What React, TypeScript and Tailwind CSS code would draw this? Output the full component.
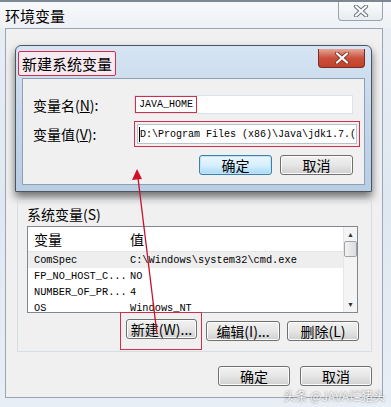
import React from "react";

const cjk = { fontFamily: '"Noto Sans CJK SC", "Liberation Sans", sans-serif' };
const mono = { fontFamily: '"Liberation Mono", "Noto Sans CJK SC", monospace' };

function CloseX({ color = "#fff", stroke = "#555" }: { color?: string; stroke?: string }) {
  return (
    <svg width="16" height="12" viewBox="0 0 16 12">
      <path d="M3 1.5 L13 10.5 M13 1.5 L3 10.5" stroke={stroke} strokeWidth="4.2" strokeLinecap="round" />
      <path d="M3 1.5 L13 10.5 M13 1.5 L3 10.5" stroke={color} strokeWidth="2.2" strokeLinecap="round" />
    </svg>
  );
}

function WinButton({ label, w, focused = false }: { label: string; w: string; focused?: boolean }) {
  return (
    <div
      className={`${w} h-[20px] flex items-center justify-center rounded-[3px] border text-[14px] leading-none text-black ${
        focused
          ? "border-[#3c7fb1] bg-gradient-to-b from-[#eaf6fd] via-[#d9f0fc] to-[#a7d9f5] shadow-[inset_0_0_0_1px_#bfe4f8]"
          : "border-[#707070] bg-gradient-to-b from-[#f2f2f2] via-[#e6e6e6] to-[#cfcfcf] shadow-[inset_0_0_0_1px_#fcfcfc]"
      }`}
      style={cjk}
    >
      {label}
    </div>
  );
}

const rows = [
  { name: "ComSpec", value: "C:\\Windows\\system32\\cmd.exe", sel: true },
  { name: "FP_NO_HOST_C...", value: "NO" },
  { name: "NUMBER_OF_PR...", value: "4" },
  { name: "OS", value: "Windows_NT" },
];

export default function App() {
  return (
    <div className="relative w-[391px] h-[407px] overflow-hidden bg-gradient-to-b from-[#e9eef4] via-[#dfe8f1] to-[#e8eef5] border-t-[2px] border-[#7d8894]">
      {/* outer title bar */}
      <div className="h-[26px] flex items-start justify-between bg-gradient-to-b from-[#f7f8fa] to-[#eef1f5]">
        <span className="pl-[5px] pt-[6px] text-[15px] leading-none text-black" style={cjk}>
          环境变量
        </span>
        <div className="mr-[8px] w-[45px] h-[19px] flex items-center justify-center rounded-b-[4px] border border-t-0 border-[#9aa4ae] bg-gradient-to-b from-[#fbfbfb] to-[#e8ecf0]">
          <CloseX color="#fff" stroke="#6b7580" />
        </div>
      </div>

      {/* outer content */}
      <div className="ml-[5px] w-[378px] h-[370px] bg-[#f0f0f0] border border-[#98a6b5] flex flex-col">
        {/* new system variable dialog */}
        <div className="ml-[9px] mt-[16px] w-[357px] h-[147px] rounded-t-[6px] border border-[#4b5663] bg-gradient-to-b from-[#d6e4f2] via-[#c3d6ea] to-[#b9cde3] shadow-[0_5px_9px_rgba(0,0,0,0.55)] flex flex-col">
          <div className="h-[32px] flex items-start justify-between">
            <span
              className="ml-[2px] mt-[5px] px-[3px] h-[25px] flex items-center border-[1.5px] border-[#d22d4a] rounded-[2px] bg-[#f6eaf0] text-[15px] leading-none text-black"
              style={cjk}
            >
              新建系统变量
            </span>
            <div className="mr-[6px] mt-[3px] w-[47px] h-[19px] flex items-center justify-center rounded-b-[4px] border border-t-0 border-[#7a2a20] bg-gradient-to-b from-[#e6a597] via-[#c9503c] to-[#c4402a]">
              <CloseX color="#fff" stroke="#8a3a2e" />
            </div>
          </div>
          <div className="mx-[6px] h-[107px] bg-[#f0f0f0] border border-[#8ea0b5] flex flex-col pl-[10px] pt-[16px]">
            <div className="flex items-center h-[19px]">
              <span className="w-[101px] text-[14px] leading-none text-black" style={cjk}>
                变量名(<span className="underline">N</span>):
              </span>
              <div className="w-[219px] h-[19px] bg-white border border-[#dde3ea] flex items-stretch">
                <span
                  className="px-[3px] flex items-center border-[1.5px] border-[#d22d4a] text-[10px] text-black"
                  style={mono}
                >
                  JAVA_HOME
                </span>
              </div>
            </div>
            <div className="flex items-center mt-[7px] h-[26px]">
              <span className="w-[101px] text-[14px] leading-none text-black" style={cjk}>
                变量值(<span className="underline">V</span>):
              </span>
              <div className="w-[226px] h-[26px] border-[1.5px] border-[#d22d4a] p-[2px]">
                <div
                  className="h-full bg-white border border-[#b8c2cc] flex items-center pl-[1px] text-[10px] text-black whitespace-nowrap overflow-hidden"
                  style={mono}
                >
                  <span className="border-l border-black">D:\Program Files (x86)\Java\jdk1.7.(</span>
                </div>
              </div>
            </div>
            <div className="flex justify-end gap-[8px] pr-[11px] mt-[8px]">
              <WinButton label="确定" w="w-[73px]" focused />
              <WinButton label="取消" w="w-[73px]" />
            </div>
          </div>
        </div>

        {/* system variables group */}
        <div className="ml-[11px] mt-[8px] w-[355px] h-[152px] border border-[#d5dde5] flex flex-col pl-[9px]">
          <span className="pt-[6px] text-[14px] leading-none text-black" style={cjk}>
            系统变量(S)
          </span>
          <div className="mt-[5px] w-[331px] h-[87px] bg-white border border-[#828790] flex overflow-hidden">
            <div className="flex-1 flex flex-col">
              <div className="h-[25px] shrink-0 flex items-center border-b border-[#e5e5e5] text-[14px] leading-none text-black" style={cjk}>
                <span className="w-[101px] pl-[6px]">变量</span>
                <span className="pl-[1px]">值</span>
              </div>
              {rows.map((r) => (
                <div
                  key={r.name}
                  className={`h-[16px] shrink-0 flex items-center text-[10.3px] leading-none text-black whitespace-nowrap ${
                    r.sel ? "bg-[#eeeeee]" : ""
                  }`}
                  style={mono}
                >
                  <span className="w-[101px] pl-[6px]">{r.name}</span>
                  <span className="pl-[1px]">{r.value}</span>
                </div>
              ))}
            </div>
            <div className="w-[14px] bg-[#f4f4f4] border-l border-[#e6e6e6] flex flex-col items-center pt-[4px]">
              <span className="text-[7px] leading-none text-[#333]">▲</span>
              <div className="mt-[3px] w-[13px] h-[16px] rounded-[2px] border border-[#9da3aa] bg-gradient-to-r from-[#f3f3f3] to-[#dcdcdc]" />
              <span className="mt-auto mb-[4px] text-[7px] leading-none text-[#333]">▼</span>
            </div>
          </div>
          <div className="flex items-start -mt-[1px]">
            <div className="ml-[93px] w-[82px] h-[38px] border-[1.5px] border-[#d22d4a] pt-[6px] pl-[5px]">
              <WinButton label="新建(W)..." w="w-[71px]" />
            </div>
            <div className="ml-[4px] mt-[9px]">
              <WinButton label="编辑(I)..." w="w-[74px]" />
            </div>
            <div className="ml-[7px] mt-[9px]">
              <WinButton label="删除(L)" w="w-[72px]" />
            </div>
          </div>
        </div>

        <div className="flex justify-end gap-[10px] pr-[10px] mt-[14px]">
          <WinButton label="确定" w="w-[72px]" />
          <WinButton label="取消" w="w-[72px]" />
        </div>
      </div>

      {/* watermark */}
      <span
        className="absolute right-[6px] bottom-[5px] text-[12px] leading-none text-white/90 [text-shadow:0_0_2px_rgba(0,0,0,0.6)]"
        style={cjk}
      >
        头条 @JAVA烂猪头
      </span>

      {/* red annotation arrow */}
      <svg className="absolute left-0 top-0 pointer-events-none" width="391" height="407">
        <line x1="138" y1="176" x2="157" y2="332" stroke="#c8102e" strokeWidth="1.3" />
        <polygon points="137,167 132,178 142,177" fill="#d0102a" />
      </svg>
    </div>
  );
}
